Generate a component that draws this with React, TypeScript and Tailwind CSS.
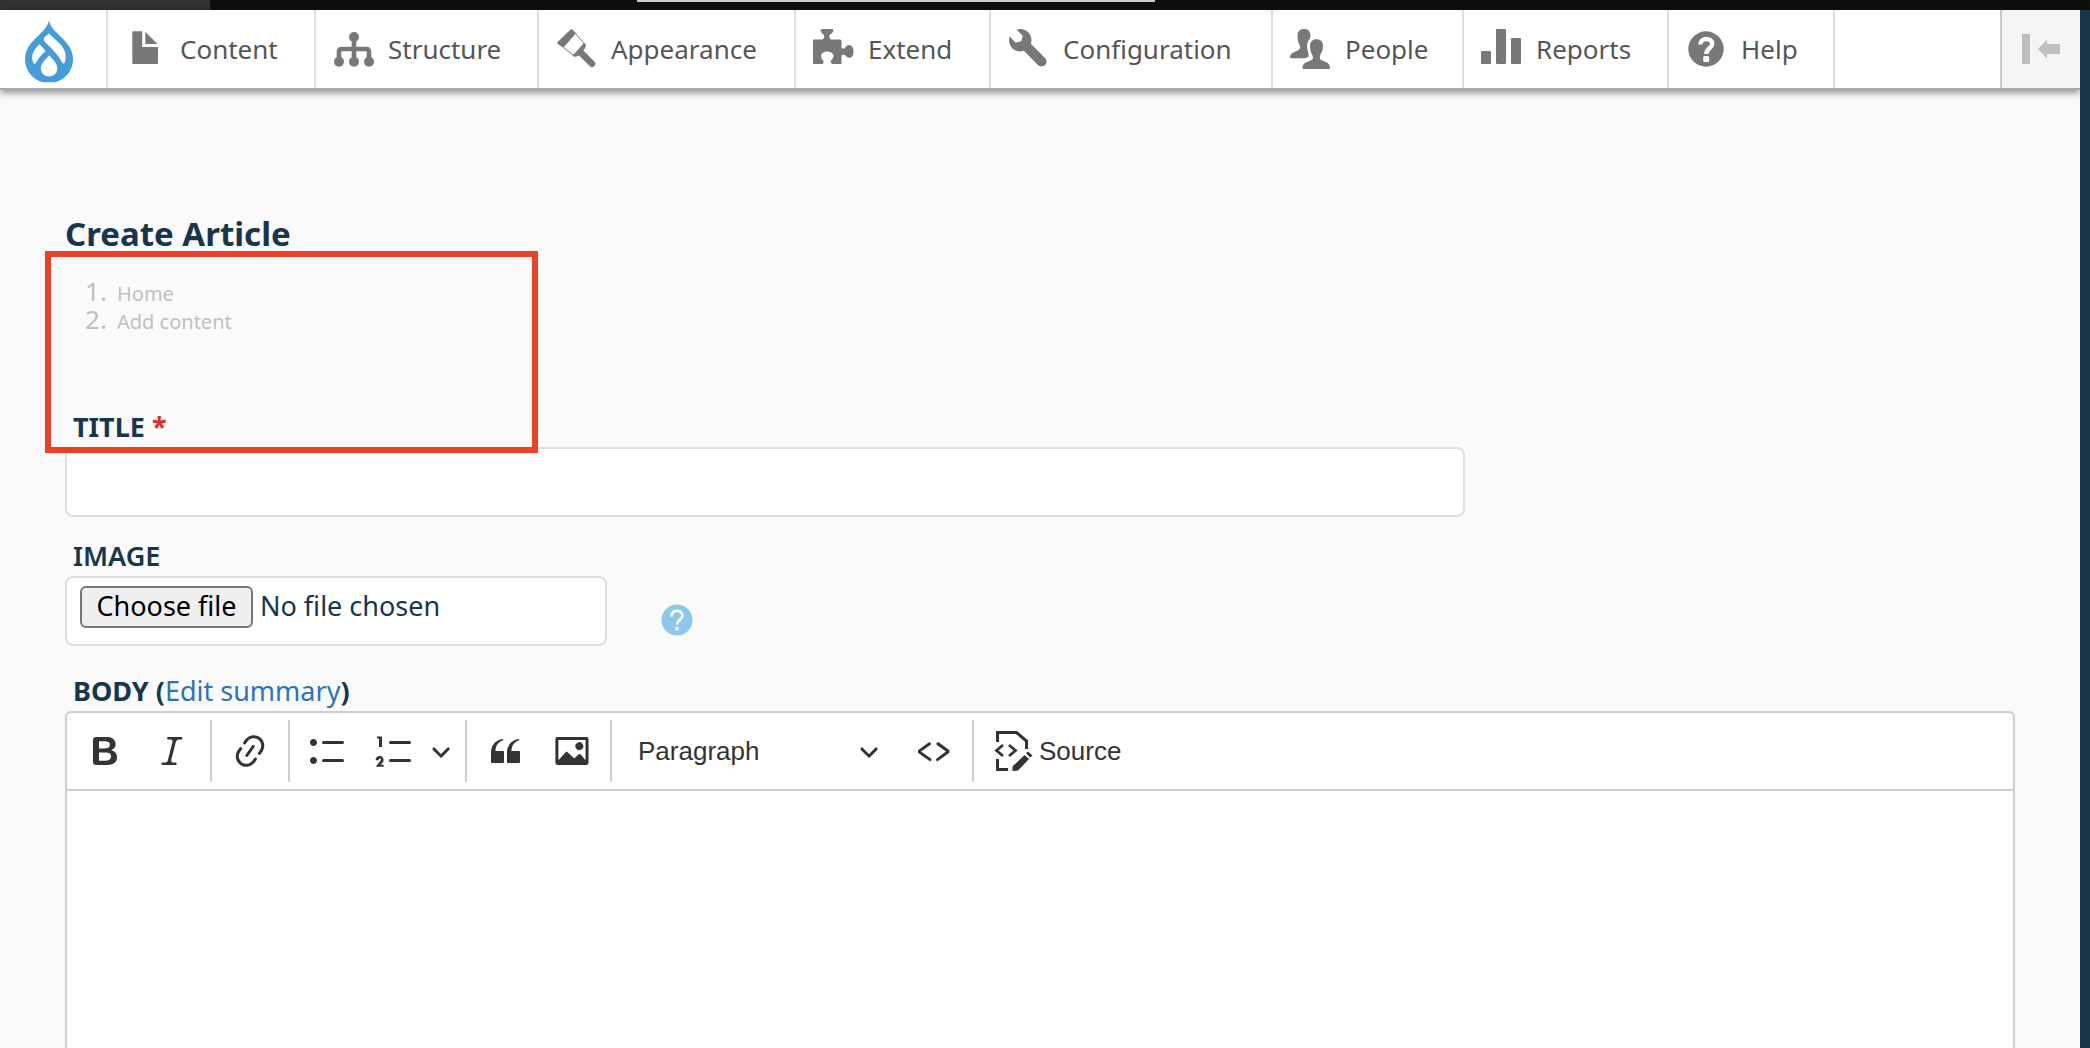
import type { ReactNode } from "react";

const tabs: { label: string; width: string; icon: ReactNode }[] = [
  {
    label: "Content",
    width: "w-[208px]",
    icon: (
      <>
        <path d="M7.3 2.3H16.2V18H32V34a1 1 0 0 1-1 1H7.3a1 1 0 0 1-1-1V3.3a1 1 0 0 1 1-1Z" />
        <path d="M19.3 2.7L31.5 15H19.3Z" />
      </>
    ),
  },
  {
    label: "Structure",
    width: "w-[223px]",
    icon: (
      <>
        <path d="M5 32V23Q5 20 8 20H32Q35 20 35 23V32M20 8V32" fill="none" stroke="currentColor" strokeWidth="4.6" />
        <circle cx="20" cy="8" r="5" />
        <circle cx="5" cy="32.7" r="5" />
        <circle cx="20" cy="32.7" r="5" />
        <circle cx="35" cy="32.7" r="5" />
      </>
    ),
  },
  {
    label: "Appearance",
    width: "w-[257px]",
    icon: (
      <>
        <path d="M13.6 .6Q14.5 -.2 15.5 .6L18.9 4.2L6.3 18.7L.8 15Q-.4 14 .6 13Z" />
        <path d="M18.2 4.2L27.5 15L16.5 26.2L6.2 18.4" fill="none" stroke="currentColor" strokeWidth="1" />
        <path d="M27.3 13.5L29 16.5Q28.5 19 26.5 21.5L37.3 32.5A3 3 0 0 1 33 37.2L22 26.5Q20 28 16.8 27.5L15 25.8L17 25.5Z" />
      </>
    ),
  },
  {
    label: "Extend",
    width: "w-[195px]",
    icon: (
      <path d="M0 10.5H9Q11 8.5 10 6Q7 4 6.5 1.5Q6.5 0 8 0H18Q19.5 0 19.5 1.5Q19 4 15.5 6Q14.5 8.5 16.5 10.5H26Q27.5 10.5 27.5 12V18.5Q29 20.5 31 19Q32.5 16 35.5 16Q39.5 17 39.5 22.5Q39.5 28 35.5 29Q32.5 28.5 31 26Q29 25 27.5 26.5V35H18Q15.8 33 17 31.5Q19.5 29.5 19.5 27A6.2 4.4 0 0 0 7 27Q7 29.5 9 31.5Q10.5 33 8.5 35H0Q-1 35-1 34V11.5Q-1 10.5 0 10.5Z" />
    ),
  },
  {
    label: "Configuration",
    width: "w-[282px]",
    icon: (
      <path
        transform="scale(2.5)"
        d="M14.416 11.586l-.01-.008v-.001l-5.656-5.656c.15-.449.252-.921.252-1.421 0-2.485-2.016-4.5-4.502-4.5-.505 0-.981.102-1.434.255l2.431 2.431-.588 2.196-2.196.588-2.445-2.445c-.162.464-.268.956-.268 1.475 0 2.486 2.014 4.5 4.5 4.5.5 0 .972-.102 1.421-.251l5.667 5.665c.781.781 2.047.781 2.828 0s.781-2.047 0-2.828z"
      />
    ),
  },
  {
    label: "People",
    width: "w-[191px]",
    icon: (
      <>
        <path d="M25.5 10.3C29.5 10.3 32 13 32 16.5C32 20 31 23 29.5 25.5C28.5 27.5 28.5 29 29.5 30.5C32 32.5 39 33 39 38.5Q39 40 38 40H12.5Q11.5 40 11.5 38.5C11.5 33 19 32.5 21.3 30.5C22.5 29 22 27.5 21 25.5C19.5 23 19 20 19 16.5C19 13 21.5 10.3 25.5 10.3Z" />
        <path d="M13 0C17 0 19.5 2.5 19.5 6.5Q19.5 8.5 19 9.5C16 12.5 15.8 17 16.5 20.5C17 23 17.7 25 17.7 27.5C16 28.8 14 29.3 12 29.3H0Q-1 29.3-1 28.3C-1 23.5 6 22.5 8 20.5C9.5 19 9.5 17.5 8.5 16C7 13 6.5 10 6.5 6.5C6.5 2.5 9 0 13 0Z" />
      </>
    ),
  },
  {
    label: "Reports",
    width: "w-[205px]",
    icon: (
      <>
        <rect x="-1" y="22" width="10" height="13" rx="1" />
        <rect x="14" y="0" width="10" height="35" rx="1" />
        <rect x="29" y="9" width="10" height="26" rx="1" />
      </>
    ),
  },
  {
    label: "Help",
    width: "w-[166px]",
    icon: (
      <>
        <circle cx="19" cy="20" r="17.7" />
        <path d="M13.3 15.5C13.3 8.2 25.2 8.2 25.2 14.8C25.2 19.5 19.3 19 19.3 25" fill="none" stroke="#fff" strokeWidth="4.4" />
        <rect x="16.2" y="27" width="6" height="6" rx="1.5" fill="#fff" />
      </>
    ),
  },
];

const paths = {
  bold: "M10.187 17H5.773c-.637 0-1.092-.138-1.364-.415-.273-.277-.409-.718-.409-1.323V4.738c0-.617.14-1.062.419-1.332.279-.27.73-.406 1.354-.406h4.68c.69 0 1.288.041 1.793.124.506.083.96.242 1.36.477.341.197.644.447.906.75a3.262 3.262 0 0 1 .808 2.162c0 1.401-.722 2.426-2.167 3.075C15.05 10.175 16 11.315 16 13.01a3.756 3.756 0 0 1-2.296 3.504 6.1 6.1 0 0 1-1.517.377c-.571.073-1.238.11-2 .11zm-.217-6.217H7v4.087h3.069c1.977 0 2.965-.69 2.965-2.072 0-.707-.256-1.22-.768-1.537-.512-.319-1.277-.478-2.296-.478zM7 5.13v3.619h2.606c.729 0 1.292-.067 1.69-.2a1.6 1.6 0 0 0 .91-.765c.165-.267.247-.566.247-.897 0-.707-.26-1.176-.778-1.409-.519-.232-1.31-.348-2.375-.348H7z",
  italic:
    "m9.586 14.633.021.004c-.036.335.095.655.393.962.082.083.173.15.274.201h1.474a.6.6 0 1 1 0 1.2H5.304a.6.6 0 0 1 0-1.2h1.15c.474-.07.809-.182 1.005-.334.157-.122.291-.32.404-.597l2.416-9.55a1.053 1.053 0 0 0-.281-.823 1.12 1.12 0 0 0-.442-.296H8.15a.6.6 0 0 1 0-1.2h6.443a.6.6 0 1 1 0 1.2h-1.195c-.376.056-.65.155-.823.296-.215.175-.423.439-.623.79l-2.366 9.347z",
  link: "m11.077 15 .991-1.416a.75.75 0 1 1 1.229.86l-1.148 1.64a.748.748 0 0 1-.217.206 5.251 5.251 0 0 1-8.503-5.955.741.741 0 0 1 .12-.274l1.147-1.639a.75.75 0 1 1 1.228.86L4.933 10.7l.006.003a3.75 3.75 0 0 0 6.132 4.294l.006.004zm5.494-5.335a.748.748 0 0 1-.12.274l-1.147 1.639a.75.75 0 1 1-1.228-.86l.86-1.23a3.75 3.75 0 0 0-6.144-4.301l-.86 1.229a.75.75 0 0 1-1.229-.86l1.148-1.64a.748.748 0 0 1 .217-.206 5.251 5.251 0 0 1 8.503 5.955zm-4.563-2.532a.75.75 0 0 1 .184 1.045l-3.155 4.505a.75.75 0 1 1-1.229-.86l3.155-4.506a.75.75 0 0 1 1.045-.184z",
  bulleted:
    "M7 5.75c0 .414.336.75.75.75h9.5a.75.75 0 1 0 0-1.5h-9.5a.75.75 0 0 0-.75.75zm-6 0C1 4.784 1.777 4 2.75 4c.966 0 1.75.777 1.75 1.75 0 .966-.777 1.75-1.75 1.75C1.784 7.5 1 6.723 1 5.75zm6 9c0 .414.336.75.75.75h9.5a.75.75 0 1 0 0-1.5h-9.5a.75.75 0 0 0-.75.75zm-6 0c0-.966.777-1.75 1.75-1.75.966 0 1.75.777 1.75 1.75 0 .966-.777 1.75-1.75 1.75-.966 0-1.75-.777-1.75-1.75z",
  numbered:
    "M7 5.75c0 .414.336.75.75.75h9.5a.75.75 0 1 0 0-1.5h-9.5a.75.75 0 0 0-.75.75zM3.5 3v5H2V3.7H1v-1h2.5V3zM.343 17.857l2.59-3.257H2.92a.6.6 0 1 0-1.04 0H.302a2 2 0 1 1 3.995 0h-.001c-.048.405-.16.734-.333.988-.175.254-.59.692-1.244 1.312H4.3v1h-4l.043-.043zM7 14.75a.75.75 0 0 1 .75-.75h9.5a.75.75 0 1 1 0 1.5h-9.5a.75.75 0 0 1-.75-.75z",
  quote:
    "M3 10.423a6.5 6.5 0 0 1 6.056-6.408l.038.67C6.448 5.423 5.354 7.663 5.22 10H9c.552 0 .5.432.5.986v4.511c0 .554-.448.503-1 .503h-5c-.552 0-.5-.449-.5-1.003v-4.574zm8 0a6.5 6.5 0 0 1 6.056-6.408l.038.67c-2.646.739-3.74 2.979-3.873 5.315H17c.552 0 .5.432.5.986v4.511c0 .554-.448.503-1 .503h-5c-.552 0-.5-.449-.5-1.003v-4.574z",
  image:
    "M6.91 10.54c.26-.23.64-.21.88.03l3.36 3.14 2.23-2.06a.64.64 0 0 1 .87 0l2.52 2.97V4.5H3.2v10.12l3.71-4.08zm10.27-7.51c.6 0 1.09.47 1.09 1.05v11.84c0 .59-.49 1.06-1.09 1.06H2.79c-.6 0-1.09-.47-1.09-1.06V4.08c0-.58.49-1.05 1.1-1.05h14.38zm-5.22 5.56a1.96 1.96 0 1 1 3.4-1.96 1.96 1.96 0 0 1-3.4 1.96z",
  code: "m12.5 5.7 5.2 3.9v1.3l-5.6 4c-.1.2-.3.2-.5.2-.3-.1-.6-.7-.6-1l.3-.4 4.7-3.5L11.5 7l-.2-.2c-.1-.3-.1-.6 0-.8.2-.2.5-.4.8-.4a.8.8 0 0 1 .4.1zm-5.2 0L2 9.6v1.3l5.6 4c.1.2.3.2.5.2.3-.1.7-.7.6-1 0-.1 0-.3-.2-.4l-5-3.5L8.2 7l.2-.2c.1-.3.1-.6 0-.8-.2-.2-.5-.4-.8-.4a.8.8 0 0 0-.3.1z",
};

function ToolButton({ label, d }: { label: string; d: string }) {
  return (
    <button type="button" aria-label={label} className="flex h-[60px] w-[60px] shrink-0 items-center justify-center">
      <svg viewBox="0 0 20 20" className="size-10" fill="currentColor">
        <path d={d} />
      </svg>
    </button>
  );
}

function Chevron() {
  return (
    <svg viewBox="0 0 10 10" className="size-5" fill="currentColor">
      <path d="M.941 4.523a.75.75 0 1 1 1.06-1.06l3.006 3.005 3.005-3.005a.75.75 0 1 1 1.06 1.06l-3.549 3.55a.75.75 0 0 1-1.168-.136L.941 4.523z" />
    </svg>
  );
}

function Separator() {
  return <span className="mx-px h-[62px] w-[2px] shrink-0 bg-[#ccced1]" />;
}

function AdminBar() {
  return (
    <nav className="flex h-20 shrink-0 border-b-2 border-[#aaaaaa] bg-white text-[26px] shadow-[0_2px_8px_rgba(0,0,0,0.5)]">
      <a href="#home" aria-label="Home" className="flex w-[108px] shrink-0 items-center border-r-2 border-[#dddddd] pl-[25px]">
        <svg viewBox="0 0 48 63" className="mt-1 h-[63px] w-12">
          <path
            fill="#459cdb"
            fillRule="evenodd"
            d="M24 0C25 6 29 10 33 14C39 20 48 27 48 39C48 50 41 59.5 30 62.3H18C7 59.5 0 50 0 39C0 27 9 20 15 14C19 10 23 6 24 0ZM23.8 13.4C22 15 20 16.5 19 18Q18.2 20 19.6 21.5C26 28 33 34 36.8 42Q38.6 45 40 42C42.5 33 38 26 33 22C29 18 26.5 16 23.8 13.4ZM14.8 24.3C10 28 7.2 33 7.2 38C7.2 40 7.7 41.7 8.5 43.1Q9.8 44.8 11 42.8C13 38.5 16 35 20 32Q20.5 31 19.8 30ZM24.1 35.3C21 39.5 15.8 43 15.8 48.5A8.3 8 0 0 0 32.4 48.5C32.4 43 27.5 39.5 24.1 35.3Z"
          />
        </svg>
      </a>
      {tabs.map((tab) => (
        <a
          key={tab.label}
          href={"#" + tab.label.toLowerCase()}
          className={"flex shrink-0 items-center gap-[14px] border-r-2 border-[#dddddd] pl-[18px] text-[#565656] " + tab.width}
        >
          <svg viewBox="0 0 40 40" className="size-10 shrink-0 overflow-visible text-[#787878]" fill="currentColor">
            {tab.icon}
          </svg>
          {tab.label}
        </a>
      ))}
      <button
        type="button"
        aria-label="Vertical orientation"
        className="ml-auto flex w-20 shrink-0 items-center justify-center border-l-2 border-[#c9c9c9] bg-[#f4f4f4]"
      >
        <svg viewBox="0 0 40 32" className="h-8 w-10" fill="#bebebe">
          <rect x="1" y="1" width="8" height="30" />
          <path d="M17 16L26 6.5V11H39V21H26V25.5Z" />
        </svg>
      </button>
    </nav>
  );
}

export default function App() {
  return (
    <div className="flex min-h-screen flex-col bg-[#fafafa] font-['Noto_Sans',sans-serif] text-[27px] leading-8 text-[#17364b]">
      <div className="flex h-[10px] shrink-0 bg-[#0f0f0f]">
        <div className="w-[210px] bg-[#333333]" />
        <div className="ml-[427px] h-[2px] w-[518px] bg-[#cccccc]" />
      </div>
      <div className="flex flex-1">
        <div className="flex min-w-0 flex-1 flex-col">
          <AdminBar />
          <form className="flex flex-1 flex-col pt-[124px] pr-[65px] pl-[65px]">
            <h1 className="text-[33px] leading-10 font-bold">Create Article</h1>
            <div className="relative pt-[23px]">
              <ol className="pl-5 text-[26px] leading-7 text-[#c0c0c0]">
                {["Home", "Add content"].map((item, i) => (
                  <li key={item} className="flex h-7 items-baseline">
                    <span className="w-8">{i + 1}.</span>
                    <a href="#crumb" className="text-[20px]">
                      {item}
                    </a>
                  </li>
                ))}
              </ol>
              <label htmlFor="title" className="mt-[78px] block pl-2 font-bold">
                TITLE <span className="text-[#e32b20]">*</span>
              </label>
              <div className="pointer-events-none absolute -top-[3px] -bottom-[10px] -left-5 w-[493px] border-6 border-[#ea4025]" />
            </div>
            <input
              id="title"
              type="text"
              className="mt-1 h-[70px] w-[1400px] max-w-full rounded-lg border-2 border-[#dadfe2] bg-white px-4"
            />
            <span className="mt-[23px] block pl-2 font-semibold">IMAGE</span>
            <div className="mt-1 flex items-center">
              <label htmlFor="image" className="flex h-[70px] w-[542px] items-start rounded-lg border-2 border-[#dadfe2] bg-white pt-2 pl-[13px]">
                <input id="image" type="file" aria-label="Image" className="sr-only" />
                <span className="flex h-[42px] w-[173px] items-center justify-center rounded-md border-2 border-[#767676] bg-[#efefef] pb-[2px] text-black">
                  Choose file
                </span>
                <span className="pt-1 pl-[7px]">No file chosen</span>
              </label>
              <button type="button" aria-label="Help" className="mt-[18px] ml-[54px]">
                <svg viewBox="0 0 32 32" className="size-8">
                  <circle cx="16" cy="16" r="15.5" fill="#8cc8eb" />
                  <path d="M10.5 12.5C10.5 5 21.5 5 21.5 11.8C21.5 15.5 16 16 16 20.5" fill="none" stroke="#fff" strokeWidth="2.8" />
                  <rect x="14.4" y="23" width="3.2" height="3.4" fill="#fff" />
                </svg>
              </button>
            </div>
            <div className="mt-[29px] pl-2 font-bold">
              <span>BODY (</span>
              <a href="#summary" className="font-normal text-[#2f72b9]">
                Edit summary
              </a>
              <span>)</span>
            </div>
            <div className="mt-1 flex flex-1 flex-col rounded-t-md border-2 border-b-0 border-[#ccced1] bg-white font-['Liberation_Sans',sans-serif] text-[26px] text-[#333333]">
              <div className="flex h-[78px] shrink-0 items-center gap-[7px] border-b-2 border-[#ccced1] pl-2">
                <ToolButton label="Bold" d={paths.bold} />
                <ToolButton label="Italic" d={paths.italic} />
                <Separator />
                <ToolButton label="Link" d={paths.link} />
                <Separator />
                <ToolButton label="Bulleted List" d={paths.bulleted} />
                <div className="flex">
                  <ToolButton label="Numbered List" d={paths.numbered} />
                  <button type="button" aria-label="List options" className="flex w-8 items-center justify-center">
                    <Chevron />
                  </button>
                </div>
                <Separator />
                <ToolButton label="Block quote" d={paths.quote} />
                <ToolButton label="Image" d={paths.image} />
                <Separator />
                <div className="relative w-[277px]">
                  <select aria-label="Heading" className="h-[60px] w-full appearance-none bg-transparent pl-[18px]">
                    <option>Paragraph</option>
                  </select>
                  <span className="pointer-events-none absolute inset-y-0 right-[18px] flex items-center">
                    <Chevron />
                  </span>
                </div>
                <ToolButton label="Code" d={paths.code} />
                <Separator />
                <button type="button" className="flex h-[60px] items-center gap-[5px] px-3">
                  <svg viewBox="0 0 40 40" className="size-10" fill="none" stroke="currentColor" strokeWidth="3">
                    <path d="M3.5 11V1.5H22.5L32.5 10V18" />
                    <path d="M3.5 28V38.5H14" />
                    <path d="M9 14L2.5 19.5L9 25M15 14L21.5 19.5L15 25" strokeWidth="2.8" />
                    <path d="M30.5 24L35 28L24 39.5L18.5 40V35.5Z" fill="currentColor" stroke="none" />
                    <path d="M32 22L34 20.5L38.5 24.5L36 26.5Z" fill="currentColor" stroke="none" />
                  </svg>
                  Source
                </button>
              </div>
              <div role="textbox" aria-label="Body" contentEditable suppressContentEditableWarning className="min-h-[240px] flex-1 outline-none" />
            </div>
          </form>
        </div>
        <div className="w-[10px] shrink-0 bg-[#17364a]" />
      </div>
    </div>
  );
}
